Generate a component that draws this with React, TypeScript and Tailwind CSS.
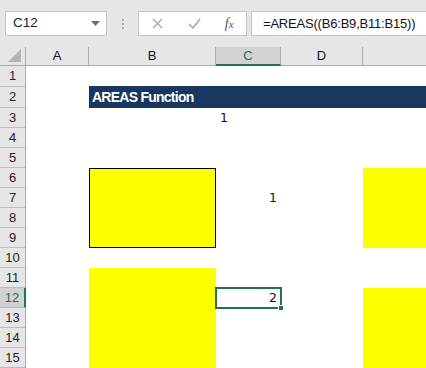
const cols = ["A", "B", "C", "D", "E"];
const rows = Array.from({ length: 15 }, (_, i) => i + 1);

const rowStart: Record<number, string> = {
  2: "row-start-2", 3: "row-start-3", 4: "row-start-4", 5: "row-start-5",
  6: "row-start-6", 7: "row-start-7", 8: "row-start-8", 9: "row-start-9",
  10: "row-start-10", 11: "row-start-11", 12: "row-start-12", 13: "row-start-13",
  14: "row-start-14", 15: "row-start-15", 16: "row-start-16",
};

const colStart: Record<number, string> = {
  2: "col-start-2", 3: "col-start-3", 4: "col-start-4", 5: "col-start-5", 6: "col-start-6",
};

const FormulaBar = () => (
  <div className="h-[47px] bg-[#e6e6e6] flex items-start pt-[11px] pl-[5px] font-['Liberation_Sans',sans-serif]">
    {/* name box */}
    <div className="w-[102px] h-[25px] bg-white border border-[#c6c6c6] flex items-center justify-between pl-[7px] pr-[6px]">
      <span className="text-[13.5px] text-[#222]">C12</span>
      <svg width="9" height="5" viewBox="0 0 9 5">
        <path d="M0 0 L9 0 L4.5 5 Z" fill="#707070" />
      </svg>
    </div>
    {/* dots */}
    <div className="w-[31px] h-[25px] flex flex-col items-center justify-center gap-[2px]">
      <span className="w-[2px] h-[2px] bg-[#a6a6a6]" />
      <span className="w-[2px] h-[2px] bg-[#a6a6a6]" />
      <span className="w-[2px] h-[2px] bg-[#a6a6a6]" />
    </div>
    {/* buttons */}
    <div className="w-[109px] h-[25px] bg-white border border-[#c6c6c6] flex items-center">
      <div className="w-[38px] flex justify-center">
        <svg width="11" height="11" viewBox="0 0 11 11">
          <path d="M1 1 L10 10 M10 1 L1 10" stroke="#a8a8a8" strokeWidth="1.4" />
        </svg>
      </div>
      <div className="w-[36px] flex justify-center">
        <svg width="13" height="11" viewBox="0 0 13 11">
          <path d="M1 6 L5 10 L12 1" stroke="#a8a8a8" strokeWidth="1.6" fill="none" />
        </svg>
      </div>
      <div className="w-[34px] flex justify-center">
        <span className="font-['Liberation_Serif',serif] italic text-[14px] text-[#555] leading-none">
          f<span className="text-[11px]">x</span>
        </span>
      </div>
    </div>
    {/* formula input */}
    <div className="ml-[4px] flex-1 h-[25px] bg-white border border-[#c6c6c6] border-r-0 flex items-center pl-[11px]">
      <span className="text-[13px] text-[#111] tracking-[-0.2px]">=AREAS((B6:B9,B11:B15))</span>
    </div>
  </div>
);

const App = () => {
  return (
    <div className="w-[426px] h-[368px] overflow-hidden bg-white font-['Liberation_Sans',sans-serif]">
      <FormulaBar />
      <div className="grid grid-cols-[26px_63px_127px_65px_82px_1fr] grid-rows-[19px_21px_21px_repeat(13,20px)]">
        {/* corner */}
        <div className="col-start-1 row-start-1 bg-[#e6e6e6] border-r border-b border-[#ababab] flex items-end justify-end pr-[4px] pb-[3px]">
          <svg width="13" height="13" viewBox="0 0 13 13">
            <path d="M13 0 L13 13 L0 13 Z" fill="#b5b5b5" />
          </svg>
        </div>
        {/* column headers */}
        {cols.map((c, i) => (
          <div
            key={c}
            className={`${colStart[i + 2]} row-start-1 flex items-center justify-center text-[13px] ${
              c === "C"
                ? "bg-[#d2d2d2] text-[#217346] border-b-2 border-[#217346] border-r border-r-[#ababab]"
                : "bg-[#e6e6e6] text-[#111] border-b border-r border-[#ababab]"
            }`}
          >
            {c}
          </div>
        ))}
        <div className="col-start-6 row-start-1 bg-[#e6e6e6] border-b border-[#ababab]" />
        {/* row headers */}
        {rows.map((r) => (
          <div
            key={r}
            className={`col-start-1 ${rowStart[r + 1]} flex items-center justify-center text-[13px] border-b border-[#bcbcbc] ${
              r === 12
                ? "bg-[#d2d2d2] text-[#217346] border-r-2 border-r-[#217346]"
                : "bg-[#e6e6e6] text-[#222] border-r border-r-[#ababab]"
            }`}
          >
            {r}
          </div>
        ))}

        {/* title band row 2 */}
        <div className="col-start-3 col-end-7 row-start-3 bg-[#17375e] flex items-center pl-[3px] -mt-px">
          <span className="text-white font-bold text-[14px] tracking-[-0.75px]">AREAS Function</span>
        </div>

        {/* C3 */}
        <div className="col-start-4 row-start-4 flex items-center pl-[4px] font-['DejaVu_Sans',sans-serif] text-[12.5px] text-[#111]">
          1
        </div>

        {/* B6:B9 bordered yellow */}
        <div className="col-start-3 row-start-7 row-end-11 bg-[#ffff00] border border-black" />

        {/* C7 */}
        <div className="col-start-4 row-start-8 flex items-center justify-end pr-[4px] font-['DejaVu_Sans',sans-serif] text-[12.5px] text-[#111]">
          1
        </div>

        {/* E6:E9 */}
        <div className="col-start-6 row-start-7 row-end-11 bg-[#ffff00]" />

        {/* B11:B15 */}
        <div className="col-start-3 row-start-12 row-end-17 bg-[#ffff00]" />

        {/* C12 selected */}
        <div className="col-start-4 row-start-13 relative flex items-center justify-end pr-[4px] font-['DejaVu_Sans',sans-serif] text-[12.5px] text-[#111]">
          2
          <div className="absolute -left-px -top-px -right-px -bottom-px border-2 border-[#217346]" />
          <div className="absolute right-[-3px] bottom-[-3px] w-[6px] h-[6px] bg-[#217346] border border-white" />
        </div>

        {/* E12:E15 */}
        <div className="col-start-6 row-start-13 row-end-17 bg-[#ffff00]" />
      </div>
    </div>
  );
};

export default App;
